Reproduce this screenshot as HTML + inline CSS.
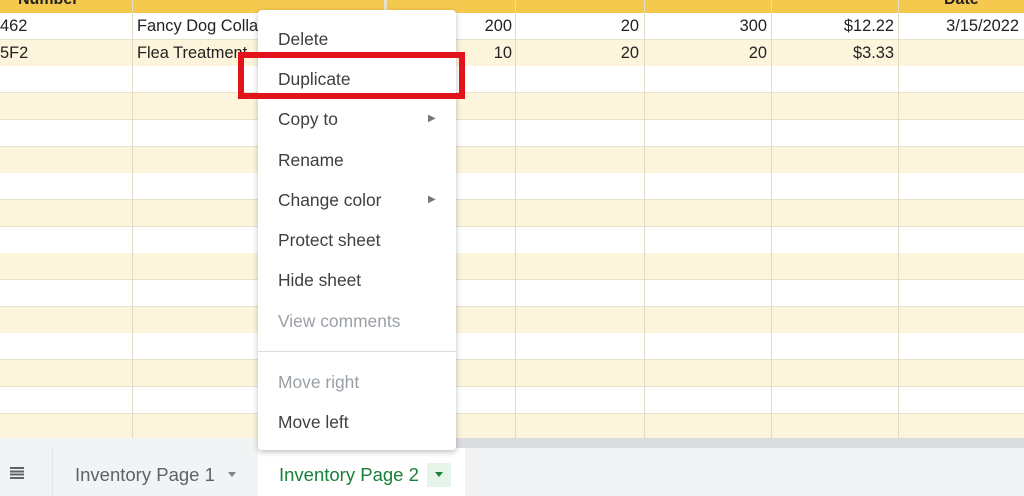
<!DOCTYPE html><html><head><style>
body{margin:0;width:1024px;height:496px;overflow:hidden;background:#fff;font-family:"Liberation Sans",Arial,sans-serif;position:relative}
.a{position:absolute}
.r{position:absolute;left:0;width:1024px;height:27px;border-bottom:1px solid #e8e2cc;box-sizing:border-box}
.c{position:absolute;font-size:16.4px;color:#222;line-height:27px}
.vl{position:absolute;top:0;height:438px;width:1px;background:#e0dcc8}
.m{position:absolute;left:278px;font-size:17.4px;color:#3c4043}
.ar{position:absolute;left:428px;font-size:10px;color:#777}
</style></head><body>
<div class="a" style="left:0;top:0;width:1024px;height:13px;background:#f5c94e"></div>
<div class="a" style="left:18px;top:-9px;font-size:16px;font-weight:bold;color:#222">Number</div>
<div class="a" style="left:944px;top:-9px;font-size:16px;font-weight:bold;color:#222">Date</div>
<div id="rows"></div>
<script>
var h='';for(var i=0;i<16;i++){var t=13+i*26.7;h+='<div class="r" style="top:'+t+'px;background:'+(i%2?'#fcf5dc':'#fff')+'"></div>';}
document.getElementById('rows').innerHTML=h;
</script>
<div class="vl" style="left:132px"></div><div class="vl" style="left:384px;width:3px;background:#e6e2d0"></div>
<div class="vl" style="left:515px"></div><div class="vl" style="left:644px"></div><div class="vl" style="left:771px"></div><div class="vl" style="left:898px"></div>
<div class="c" style="left:0;top:13px">462</div><div class="c" style="left:137px;top:13px">Fancy Dog Colla</div>
<div class="c" style="left:0;top:40px">5F2</div><div class="c" style="left:137px;top:40px">Flea Treatment</div>
<div class="c" style="right:512px;top:13px">200</div><div class="c" style="right:385px;top:13px">20</div><div class="c" style="right:257px;top:13px">300</div><div class="c" style="right:130px;top:13px">$12.22</div><div class="c" style="right:5px;top:13px">3/15/2022</div>
<div class="c" style="right:512px;top:40px">10</div><div class="c" style="right:385px;top:40px">20</div><div class="c" style="right:257px;top:40px">20</div><div class="c" style="right:130px;top:40px">$3.33</div>
<div class="a" style="left:0;top:438px;width:1024px;height:10px;background:#f1f3f4"></div>
<div class="a" style="left:456px;top:438px;width:568px;height:10px;background:#dadce0"></div>
<div class="a" style="left:0;top:448px;width:1024px;height:48px;background:#f1f3f4"></div>
<div class="a" style="left:52px;top:448px;width:1px;height:48px;background:#e3e5e6"></div>
<div class="a" style="left:10px;top:467px;width:14px;height:12px;background:repeating-linear-gradient(#5f6368 0 2px,transparent 2px 3.3px)"></div>
<div class="a" style="left:75px;top:464px;font-size:18.5px;color:#5f6368">Inventory Page 1</div>
<div class="a" style="left:228px;top:472px;border:4px solid transparent;border-top:5px solid #80868b"></div>
<div class="a" style="left:258px;top:448px;width:207px;height:48px;background:#fff"></div>
<div class="a" style="left:279px;top:464px;font-size:18.5px;color:#188038">Inventory Page 2</div>
<div class="a" style="left:427px;top:463px;width:24px;height:24px;background:#e6f4ea"></div>
<div class="a" style="left:435px;top:472px;border:4px solid transparent;border-top:5px solid #188038"></div>
<div class="a" style="left:258px;top:10px;width:198px;height:440px;background:#fff;border-radius:4px;box-shadow:0 2px 6px rgba(0,0,0,.25)"></div>
<div class="m" style="top:29px">Delete</div>
<div class="m" style="top:69px">Duplicate</div>
<div class="m" style="top:109px">Copy to</div><div class="ar" style="top:113px">▶</div>
<div class="m" style="top:150px">Rename</div>
<div class="m" style="top:190px">Change color</div><div class="ar" style="top:194px">▶</div>
<div class="m" style="top:230px">Protect sheet</div>
<div class="m" style="top:270px">Hide sheet</div>
<div class="m" style="top:311px;color:#9aa0a6">View comments</div>
<div class="a" style="left:258px;top:351px;width:198px;height:1px;background:#dadce0"></div>
<div class="m" style="top:372px;color:#9aa0a6">Move right</div>
<div class="m" style="top:412px">Move left</div>
<div class="a" style="left:238px;top:52px;width:215px;height:35px;border:6px solid #e1141c"></div>
</body></html>
